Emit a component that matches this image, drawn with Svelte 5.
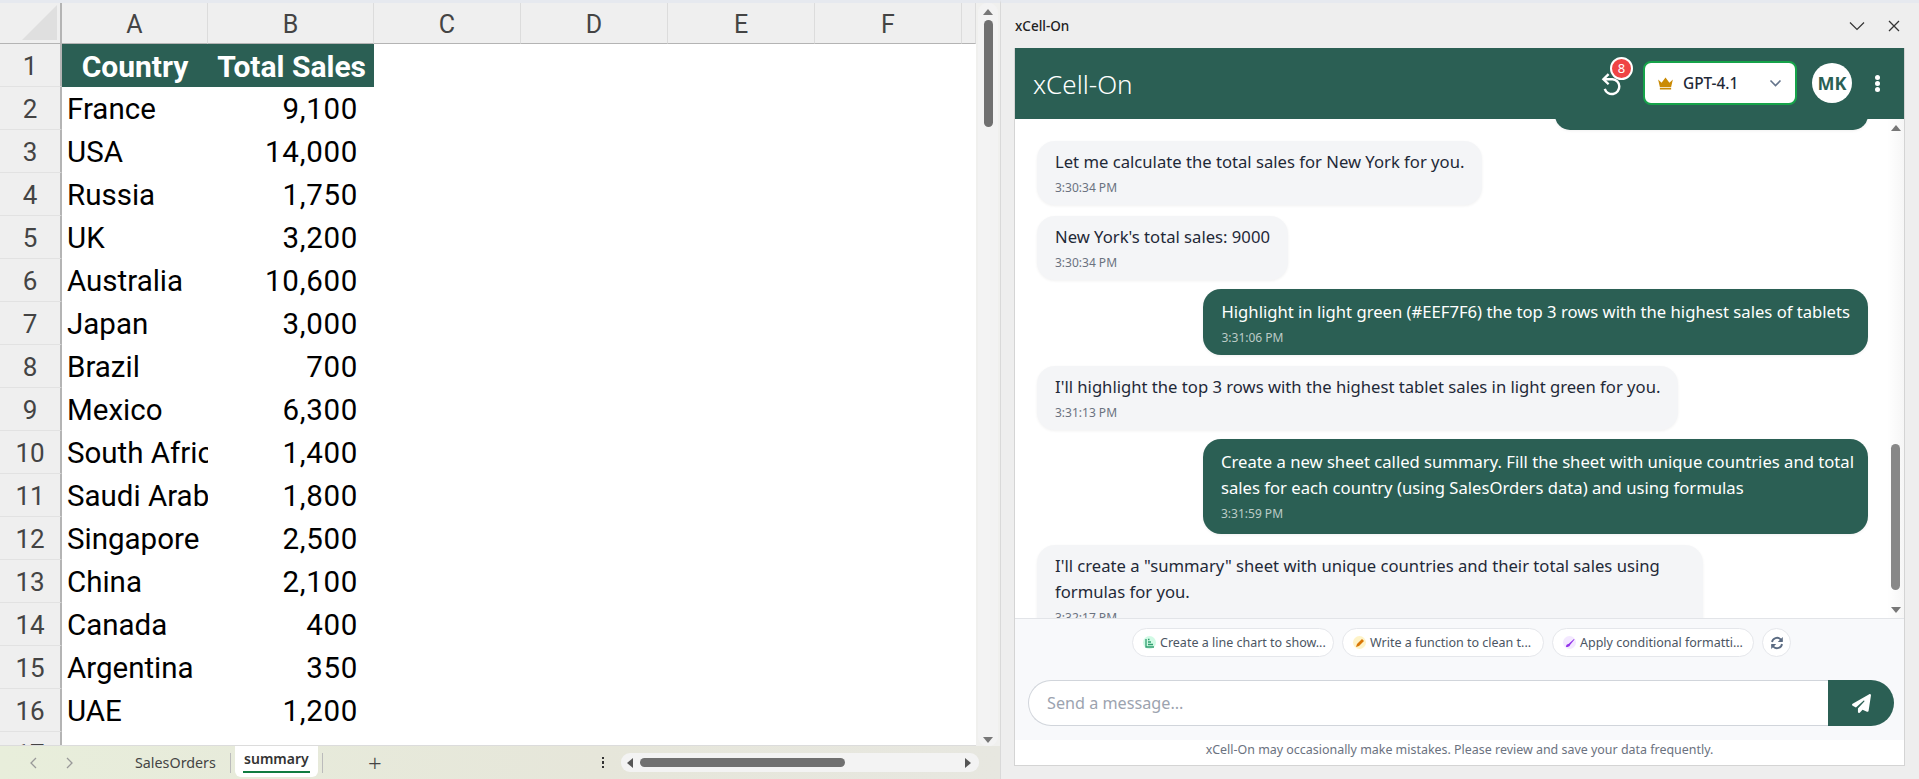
<script>
  const rows = [
    ['France','9,100'],['USA','14,000'],['Russia','1,750'],['UK','3,200'],['Australia','10,600'],
    ['Japan','3,000'],['Brazil','700'],['Mexico','6,300'],['South Africa','1,400'],['Saudi Arabia','1,800'],
    ['Singapore','2,500'],['China','2,100'],['Canada','400'],['Argentina','350'],['UAE','1,200']
  ];
  const blanks = ['C','D','E','F','G'];
</script>

<div class="app">
  <section class="sheet">
    <div class="strip"></div>
    <div class="sheet-main">
      <div class="grid-clip">
        <div class="grid">
          <div class="corner"><span class="tri"></span></div>
          <div class="ch">A</div><div class="ch">B</div>
          {#each blanks as c}<div class="ch">{c === 'G' ? '' : c}</div>{/each}

          <div class="rh">1</div>
          <div class="c hd ctr">Country</div>
          <div class="c hd rt">Total Sales</div>
          {#each blanks as c}<div class="c"></div>{/each}

          {#each rows as r, i}
            <div class="rh">{i + 2}</div>
            <div class="c txt">{r[0]}</div>
            <div class="c num">{r[1]}</div>
            {#each blanks as c}<div class="c"></div>{/each}
          {/each}
          <div class="rh">17</div>
        </div>
      </div>
      <div class="vbar">
        <span class="tu"></span>
        <span class="vthumb"></span>
        <span class="grow"></span>
        <span class="td"></span>
      </div>
    </div>
    <div class="tabs">
      <svg class="nav" width="10" height="14" viewBox="0 0 10 14"><path d="M7 2 2 7l5 5" /></svg>
      <svg class="nav nav2" width="10" height="14" viewBox="0 0 10 14"><path d="M3 2l5 5-5 5" /></svg>
      <span class="tab">SalesOrders</span>
      <span class="sep"></span>
      <span class="tab active">summary</span>
      <span class="sep"></span>
      <span class="plus">+</span>
      <span class="vdots"><i></i><i></i><i></i></span>
      <div class="hbar">
        <span class="tl"></span>
        <span class="hthumb"></span>
        <span class="grow"></span>
        <span class="tr"></span>
      </div>
    </div>
  </section>

  <section class="side">
    <div class="titlebar">
      <span class="tb-name">xCell-On</span>
      <svg class="tb-chev" width="16" height="10" viewBox="0 0 16 10"><path d="M1 1.500 8 8.500l7-7" /></svg>
      <svg class="tb-x" width="12" height="12" viewBox="0 0 12 12"><path d="M1 1l10 10M11 1 1 11" /></svg>
    </div>
    <div class="pane">
      <header class="head">
        <span class="brand">xCell-On</span>
        <div class="undo">
          <svg width="24" height="24" viewBox="0 0 20 20"><path d="M4.500 6h6.700a6.200 6.200 0 1 1-6.400 8" /><path d="M8 1.800 3.700 6l4.300 4.200" /></svg>
          <span class="badge">8</span>
        </div>
        <div class="model">
          <svg width="19" height="13" viewBox="0 0 18 15"><path d="M0.500 3 4.500 6.500 9 0.500l4.500 6L17.500 3 15.500 11.500h-13zM2.500 12.500h13v2h-13z" /></svg>
          <span class="model-name">GPT-4.1</span>
          <svg class="model-chev" width="13" height="8" viewBox="0 0 12 8"><path d="M1 1.500 6 6.500l5-5" /></svg>
        </div>
        <span class="avatar">MK</span>
        <span class="kebab"><i></i><i></i><i></i></span>
      </header>

      <div class="chat">
        <div class="msgs">
          <div class="bubble user stub"></div>
          <div class="bubble bot"><p>Let me calculate the total sales for New York for you.</p><time>3:30:34 PM</time></div>
          <div class="bubble bot"><p>New York's total sales: 9000</p><time>3:30:34 PM</time></div>
          <div class="bubble user"><p>Highlight in light green (#EEF7F6) the top 3 rows with the highest sales of tablets</p><time>3:31:06 PM</time></div>
          <div class="bubble bot"><p>I'll highlight the top 3 rows with the highest tablet sales in light green for you.</p><time>3:31:13 PM</time></div>
          <div class="bubble user wide"><p>Create a new sheet called summary. Fill the sheet with unique countries and total<br />sales for each country (using SalesOrders data) and using formulas</p><time>3:31:59 PM</time></div>
          <div class="bubble bot wide2"><p>I'll create a "summary" sheet with unique countries and their total sales using<br />formulas for you.</p><time>3:32:17 PM</time></div>
        </div>
        <div class="cbar">
          <span class="tu small"></span>
          <span class="grow"></span>
          <span class="cthumb"></span>
          <span class="td small"></span>
        </div>
      </div>

      <div class="composer">
        <div class="chips">
          <span class="chip">
            <span class="ci green"><svg width="10" height="10" viewBox="0 0 10 10"><path d="M1 1v8h8M3 6.500h5M3 4h3M3 1.500h1.500" /></svg></span>
            Create a line chart to show...
          </span>
          <span class="chip">
            <span class="ci yellow"><svg width="10" height="10" viewBox="0 0 10 10"><path d="M1 9l1-3 5-5 2 2-5 5z" /></svg></span>
            Write a function to clean t...
          </span>
          <span class="chip">
            <span class="ci purple"><svg width="10" height="10" viewBox="0 0 10 10"><path d="M1 9c0-2 1-3 2.500-3L9 1 9.500 1.500 5 7c0 1.500-2 2-4 2z" /></svg></span>
            Apply conditional formatti...
          </span>
          <span class="refresh">
            <svg width="14" height="14" viewBox="0 0 14 14"><path d="M2 6a5 5 0 0 1 8.600-2.600L12 5M12 8a5 5 0 0 1-8.600 2.600L2 9" /><path class="fill" d="M12.800 1v5h-5zM1.200 13V8h5z" /></svg>
          </span>
        </div>
        <div class="inputrow">
          <div class="input">Send a message...</div>
          <div class="send">
            <svg width="19" height="19" viewBox="0 0 512 512"><path d="M498.100 5.600c10.100 7 15.400 19.100 13.500 31.200l-64 416c-1.500 9.700-7.400 18.200-16 23s-18.900 5.400-28 1.600L284 427.700l-68.500 74.100c-8.900 9.700-22.900 12.900-35.200 8.100S160 493.200 160 480V396.400c0-4 1.500-7.800 4.200-10.700L331.800 202.800c5.800-6.300 5.600-16-.4-22s-15.700-6.400-22-.7L106 360.800 17.700 316.600C7.100 311.300 .3 300.700 0 288.900s5.900-22.800 16.100-28.700l448-256c10.700-6.100 23.900-5.500 34 1.400z" /></svg>
          </div>
        </div>
      </div>
      <footer class="disc">xCell-On may occasionally make mistakes. Please review and save your data frequently.</footer>
    </div>
  </section>
</div>

<style>
  :global(body) { margin: 0; background: #eeeeee; }
  .app { display: flex; width: 1919px; height: 779px; overflow: hidden; font-family: "Noto Sans", sans-serif; }
  p { margin: 0; }

  /* spreadsheet */
  .sheet { width: 1000px; flex: none; display: flex; flex-direction: column; background: #fff; }
  .strip { height: 3px; background: #e6e9ef; flex: none; }
  .sheet-main { flex: 1; min-height: 0; display: flex; background: #f0f0ee; }
  .grid-clip { flex: 1; min-width: 0; overflow: hidden; border-bottom: 1px solid #dcdcdc; background: #fff; }
  .grid {
    display: grid;
    grid-template-columns: 62px 146px 166px 147px 147px 147px 147px 14px;
    grid-template-rows: 41px;
    grid-auto-rows: 43px;
    font-family: Roboto, sans-serif;
  }
  .corner { background: #efefef; border-right: 2px solid #b4b4b4; border-bottom: 1px solid #b4b4b4; box-sizing: border-box; position: relative; }
  .tri { position: absolute; right: 3px; bottom: 3px; width: 0; height: 0; border-style: solid; border-width: 0 0 35px 35px; border-color: transparent transparent #dfdfdf transparent; }
  .ch {
    background: #efefef; color: #444; font-size: 25px; display: flex; align-items: center; justify-content: center;
    border-bottom: 1px solid #b4b4b4; border-right: 1px solid #dcdcdc; box-sizing: border-box; padding-top: 2px;
  }
  .rh {
    background: #efefef; color: #444; font-size: 26px; display: flex; align-items: center; justify-content: center;
    border-right: 2px solid #b4b4b4; border-bottom: 1px solid #e2e2e2; box-sizing: border-box; padding-top: 1px;
  }
  .c { font-size: 29.500px; color: #000; display: flex; align-items: center; overflow: hidden; white-space: nowrap; box-sizing: border-box; padding-top: 1px; }
  .hd { background: #2b5f54; color: #fff; font-weight: 700; }
  .ctr { justify-content: center; font-size: 30px; }
  .rt { justify-content: flex-end; padding-right: 8px; font-size: 30px; }
  .txt { padding-left: 5px; }
  .num { justify-content: flex-end; padding-right: 16px; letter-spacing: .7px; }

  .vbar { width: 20px; flex: none; margin: 0 2px 0 2px; background: #f3f3f3; box-sizing: border-box; display: flex; flex-direction: column; align-items: center; padding: 6px 0 3px; border-radius: 9px; }
  .grow { flex: 1; }
  .tu { width: 0; height: 0; border-style: solid; border-width: 0 5.500px 6px; border-color: transparent transparent #777; }
  .td { width: 0; height: 0; border-style: solid; border-width: 6px 5.500px 0; border-color: #777 transparent transparent; }
  .vthumb { width: 9px; height: 107px; background: #707070; border-radius: 5px; margin-top: 5px; }

  .tabs {
    height: 33px; flex: none; display: flex; align-items: center; position: relative;
    background: linear-gradient(90deg, #e8eedb, #e6e6da 60%, #e7e7e0);
    font-size: 14.300px; color: #444;
  }
  .nav { fill: none; stroke: #999; stroke-width: 1.300; margin-left: 29px; }
  .nav2 { margin-left: 25px; }
  .tab { margin-left: 61px; }
  .sep { width: 1px; height: 20px; background: #bbb; margin-left: 14px; }
  .tab.active {
    margin: 0 0 0 4px; height: 31px; align-self: flex-start; background: #fff; border-radius: 0 0 6px 6px; padding: 0 8px; width: 67px;
    display: flex; align-items: flex-start; justify-content: center; font-weight: 600; color: #333; line-height: 25px;
    position: relative; font-size: 14px;
  }
  .tab.active::after { content: ""; position: absolute; left: 8px; right: 8px; bottom: 4px; height: 2px; background: #107c41; }
  .tab.active + .sep { margin-left: 4px; }
  .plus { margin-left: 45px; font-size: 24px; font-weight: 300; line-height: 1; color: #444; }
  .vdots { margin-left: 220px; display: flex; flex-direction: column; gap: 2px; }
  .vdots i { width: 2.500px; height: 2.500px; background: #333; display: block; }
  .hbar { position: absolute; left: 621px; top: 7px; width: 358px; height: 19px; background: #f3f3f3; border-radius: 9px; display: flex; align-items: center; box-sizing: border-box; padding: 0 8px 0 6px; }
  .tl { width: 0; height: 0; border-style: solid; border-width: 5.500px 6px 5.500px 0; border-color: transparent #555 transparent transparent; }
  .tr { width: 0; height: 0; border-style: solid; border-width: 5.500px 0 5.500px 6px; border-color: transparent transparent transparent #555; }
  .hthumb { width: 205px; height: 9px; background: #707070; border-radius: 5px; margin-left: 7px; }

  /* side pane */
  .side { flex: 1; min-width: 0; display: flex; flex-direction: column; padding: 0 14px 13px 13px; background: #eeeeee; border-top: 3px solid #e6e9ef; border-left: 1px solid #d9d9d9; box-sizing: border-box; }
  .titlebar { height: 45px; flex: none; display: flex; align-items: center; color: #222; }
  .tb-name { font-size: 13.500px; font-weight: 500; flex: 1; padding-left: 1px; }
  .tb-chev { fill: none; stroke: #333; stroke-width: 1.200; margin-right: 23px; }
  .tb-x { fill: none; stroke: #333; stroke-width: 1.300; margin-right: 5px; }
  .pane { flex: 1; min-height: 0; background: #fff; border: 1px solid #d4d4d4; border-top: none; display: flex; flex-direction: column; }
  .head { height: 71px; flex: none; background: #2b5f54; display: flex; align-items: center; padding-left: 18px; color: #fff; position: relative; z-index: 2; }
  .brand { font-size: 26px; font-weight: 300; flex: 1; }
  .undo { position: relative; width: 20px; height: 20px; margin-right: 22px; }
  .undo svg { fill: none; stroke: #fff; stroke-width: 2; display: block; margin: -2px; }
  .badge { position: absolute; left: 9px; top: -17px; width: 19px; height: 19px; box-sizing: content-box; border: 2px solid #fff; border-radius: 50%; background: #ef4444; color: #fff; font-size: 13px; display: flex; align-items: center; justify-content: center; }
  .model { width: 154px; height: 44px; box-sizing: border-box; background: #fff; border: 2px solid #16a34a; border-radius: 8px; display: flex; align-items: center; padding-left: 11px; color: #1f2937; margin-top: -1px; }
  .model svg { fill: #ca8a04; flex: none; }
  .model-name { font-size: 15.400px; font-weight: 500; margin-left: 8px; flex: 1; }
  .model svg.model-chev { fill: none; stroke: #64748b; stroke-width: 1.600; margin-right: 13px; }
  .avatar { width: 40px; height: 40px; margin-left: 15px; border-radius: 50%; background: #fff; color: #2b5f54; font-weight: 700; font-size: 18px; display: flex; align-items: center; justify-content: center; margin-top: -1px; }
  .kebab { margin-left: 23px; margin-right: 24px; display: flex; flex-direction: column; gap: 1px; margin-top: -1px; }
  .kebab i { width: 5px; height: 5px; border-radius: 50%; background: #fff; display: block; }

  .chat { flex: 1; min-height: 0; display: flex; overflow: hidden; }
  .msgs { flex: 1; min-width: 0; display: flex; flex-direction: column; align-items: flex-start; gap: 11px; padding: 0 19px 0 22px; }
  .bubble { box-sizing: border-box; border-radius: 18px; padding: 8px 18px 7px; font-size: 16.650px; line-height: 26px; box-shadow: 0 1px 3px rgba(0,0,0,.06); flex: none; white-space: nowrap; }
  .bot { background: #f4f5f7; color: #1f2937; }
  .user { background: #2b5f54; color: #fff; align-self: flex-end; padding-top: 10px; margin-top: -2px; }
  .stub { width: 313px; height: 30px; margin-top: -19px; padding: 0; }
  .wide { width: 665px; padding-bottom: 10px; }
  .wide2 { width: 666px; }
  time { display: block; font-size: 12px; line-height: 20px; color: #6b7280; margin-top: 3px; }
  .user time { color: #bccbc7; }
  .cbar { width: 17px; flex: none; display: flex; flex-direction: column; align-items: center; padding: 6px 0 5px; box-sizing: border-box; background: linear-gradient(90deg, #fff, #f6f6f6); }
  .tu.small, .td.small { border-left-width: 5px; border-right-width: 5px; }
  .cthumb { width: 9px; height: 146px; background: #888; border-radius: 5px; margin-bottom: 17px; }

  .composer { height: 122px; flex: none; background: #f8f9fb; border-top: 1px solid #e2e4e8; box-sizing: border-box; display: flex; flex-direction: column; }
  .chips { height: 61px; flex: none; display: flex; align-items: flex-start; padding: 9px 0 0 117px; gap: 8px; box-sizing: border-box; }
  .chip { height: 29px; width: 202px; box-sizing: border-box; background: #fff; border: 1px solid #e5e7eb; border-radius: 15px; font-size: 12.500px; color: #4b5563; display: flex; align-items: center; gap: 4px; padding-left: 10px; white-space: nowrap; overflow: hidden; }
  .ci { width: 13px; height: 13px; border-radius: 50%; display: flex; align-items: center; justify-content: center; flex: none; }
  .green { background: #d1fae5; }
  .green svg { fill: none; stroke: #2f9e6e; stroke-width: 1.300; }
  .yellow { background: #fef3c7; }
  .yellow svg { fill: #d97706; }
  .purple { background: #f3e8ff; }
  .purple svg { fill: #9333ea; }
  .refresh { width: 29px; height: 29px; box-sizing: border-box; background: #fff; border: 1px solid #e5e7eb; border-radius: 50%; display: flex; align-items: center; justify-content: center; }
  .refresh svg { fill: none; stroke: #5b6b82; stroke-width: 1.800; }
  .refresh .fill { fill: #5b6b82; stroke: none; }
  .inputrow { display: flex; height: 46px; margin: 0 10px 0 13px; }
  .input { flex: 1; box-sizing: border-box; background: #fff; border: 1px solid #d1d5db; border-right: none; border-radius: 23px 0 0 23px; font-size: 16.200px; color: #9ca3af; display: flex; align-items: center; padding-left: 18px; }
  .send { width: 66px; background: #2b5f54; border-radius: 0 23px 23px 0; display: flex; align-items: center; justify-content: center; }
  .send svg { fill: #fff; }
  .disc { height: 25px; flex: none; box-sizing: border-box; padding-bottom: 6px; display: flex; align-items: center; justify-content: center; font-size: 12.450px; color: #6b7280; }
</style>
